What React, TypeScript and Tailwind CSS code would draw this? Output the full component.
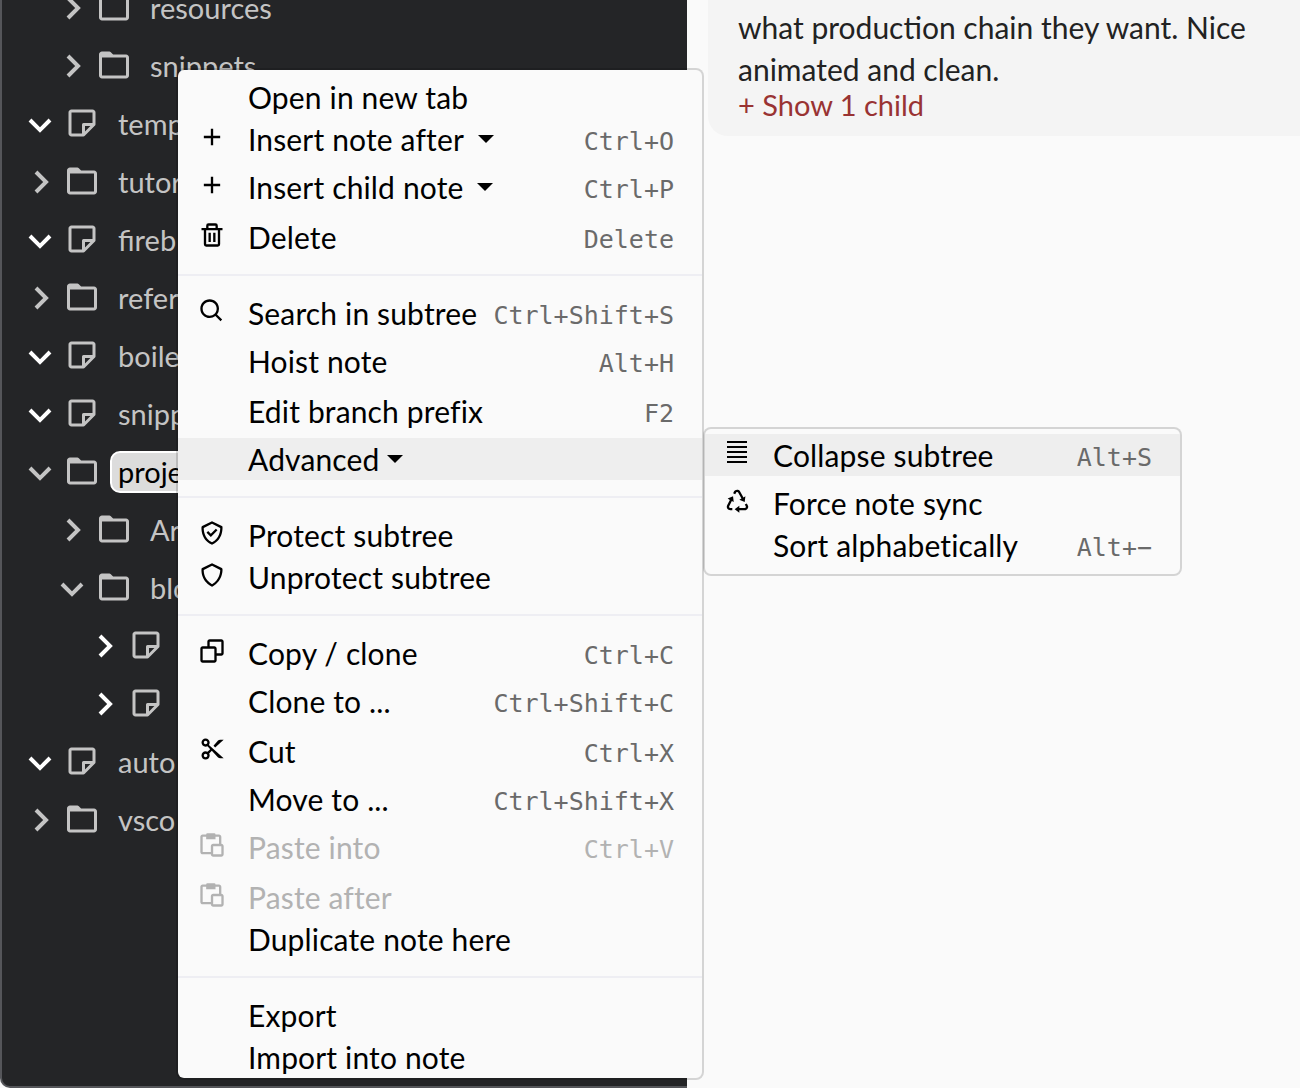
import type { ReactNode } from "react";
import {
  BiCheckShield,
  BiChevronDown,
  BiChevronRight,
  BiCopy,
  BiCut,
  BiFolder,
  BiNote,
  BiPaste,
  BiPlus,
  BiRecycle,
  BiSearch,
  BiShield,
  BiTrash,
} from "react-icons/bi";

interface TreeRow {
  label?: string;
  level: number;
  kind: "folder" | "note";
  open: boolean;
  bright: boolean;
  selected?: boolean;
}

const treeRows: TreeRow[] = [
  { label: "resources", level: 1, kind: "folder", open: false, bright: false },
  { label: "snippets", level: 1, kind: "folder", open: false, bright: false },
  { label: "temp", level: 0, kind: "note", open: true, bright: true },
  { label: "tutor", level: 0, kind: "folder", open: false, bright: false },
  { label: "fireb", level: 0, kind: "note", open: true, bright: true },
  { label: "refer", level: 0, kind: "folder", open: false, bright: false },
  { label: "boile", level: 0, kind: "note", open: true, bright: true },
  { label: "snipp", level: 0, kind: "note", open: true, bright: true },
  { label: "projects", level: 0, kind: "folder", open: true, bright: false, selected: true },
  { label: "Ar", level: 1, kind: "folder", open: false, bright: false },
  { label: "blog", level: 1, kind: "folder", open: true, bright: false },
  { level: 2, kind: "note", open: false, bright: true },
  { level: 2, kind: "note", open: false, bright: true },
  { label: "auto", level: 0, kind: "note", open: true, bright: true },
  { label: "vsco", level: 0, kind: "folder", open: false, bright: false },
];

function TreeItem({ row }: { row: TreeRow }) {
  const Chevron = row.open ? BiChevronDown : BiChevronRight;
  const Icon = row.kind === "folder" ? BiFolder : BiNote;
  return (
    <div className="flex h-[58px] items-center" style={{ paddingLeft: 14 + row.level * 32 }}>
      <Chevron size={48} className={row.bright ? "shrink-0 text-white" : "shrink-0 text-[#c4c4c4]"} />
      <Icon size={36} className="-mt-[2px] shrink-0 text-[#c4c4c4]" />
      {row.label &&
        (row.selected ? (
          <span className="ml-[10px] rounded-[10px] border-2 border-white bg-[#dcdcdc] px-[6px] text-[29px] leading-[38px] text-black">
            {row.label}
          </span>
        ) : (
          <span className="ml-[18px] text-[29px] leading-[38px] text-[#c4c4c4]">{row.label}</span>
        ))}
    </div>
  );
}

function Caret({ tight }: { tight?: boolean }) {
  return (
    <span
      className={`mb-[9px] inline-block h-0 w-0 border-x-8 border-t-8 border-x-transparent border-t-black align-middle ${
        tight ? "ml-[8px]" : "ml-[14px]"
      }`}
    />
  );
}

interface MenuRowProps {
  label: ReactNode;
  icon?: ReactNode;
  shortcut?: string;
  height: number;
  disabled?: boolean;
  active?: boolean;
  sub?: boolean;
}

function MenuRow({ label, icon, shortcut, height, disabled, active, sub }: MenuRowProps) {
  return (
    <div style={{ height }}>
      <div
        className={`flex h-[42px] items-center pr-[28px] text-[30px] tracking-[0.15px] ${
          sub ? "pl-[18px]" : "pl-[20px]"
        } ${active ? "bg-[#eeeeee]" : ""} ${disabled ? "text-[#b2b2b2]" : "text-black"}`}
      >
        <span className="-mt-[4px] flex w-[28px] shrink-0 justify-center">{icon}</span>
        <span className="ml-[22px] whitespace-nowrap leading-[42px]">{label}</span>
        {shortcut && (
          <span
            className={`ml-auto mt-[5px] whitespace-nowrap pl-2 font-['DejaVu_Sans_Mono',monospace] text-[25px] leading-[42px] tracking-normal ${
              disabled ? "text-[#b2b2b2]" : "text-[#6a6a6a]"
            }`}
          >
            {shortcut}
          </span>
        )}
      </div>
    </div>
  );
}

function Divider({ before, after }: { before: number; after: number }) {
  return <div className="h-[2px] bg-[#eeeef3]" style={{ marginTop: before, marginBottom: after }} />;
}

function CollapseIcon() {
  return (
    <svg width="28" height="28" viewBox="0 0 28 28" fill="none" stroke="currentColor" strokeWidth="2">
      <path d="M4 3h20M4 8h20M4 13h20M4 18h20M4 23h20" />
    </svg>
  );
}

export default function App() {
  return (
    <div className="relative flex h-[1088px] w-[1300px] overflow-hidden bg-[#fafafa] font-['Lato',sans-serif]">
      <aside className="h-[1088px] w-[687px] shrink-0 overflow-hidden rounded-bl-[10px] border-b-2 border-l-2 border-[#55565a] bg-[#242527]">
        <div className="-mt-[21px]">
          {treeRows.map((row, i) => (
            <TreeItem key={i} row={row} />
          ))}
        </div>
      </aside>

      <main className="ml-[21px] flex-1">
        <div className="h-[136px] rounded-bl-[20px] bg-[#f4f4f4] pl-[30px] pt-[6px] text-[30px] leading-[42px] text-[#222222]">
          <p>what production chain they want. Nice</p>
          <p>animated and clean.</p>
          <p className="-mt-[6px] text-[29px] text-[#993333]">+ Show 1 child</p>
        </div>
      </main>

      <div className="absolute left-[176px] top-[68px] h-[1012px] w-[528px] rounded-[8px] border-2 border-black/15 bg-[#fafafa] bg-clip-padding pt-[6px]">
        <MenuRow label="Open in new tab" height={42} />
        <MenuRow
          label={<>Insert note after<Caret /></>}
          icon={<BiPlus size={28} />}
          shortcut="Ctrl+O"
          height={48}
        />
        <MenuRow
          label={<>Insert child note<Caret /></>}
          icon={<BiPlus size={28} />}
          shortcut="Ctrl+P"
          height={50}
        />
        <MenuRow label="Delete" icon={<BiTrash size={28} />} shortcut="Delete" height={49} />
        <Divider before={9} after={16} />
        <MenuRow label="Search in subtree" icon={<BiSearch size={28} />} shortcut="Ctrl+Shift+S" height={48} />
        <MenuRow label="Hoist note" shortcut="Alt+H" height={50} />
        <MenuRow label="Edit branch prefix" shortcut="F2" height={48} />
        <MenuRow label={<>Advanced<Caret tight /></>} height={42} active />
        <Divider before={16} after={16} />
        <MenuRow label="Protect subtree" icon={<BiCheckShield size={28} />} height={42} />
        <MenuRow label="Unprotect subtree" icon={<BiShield size={28} />} height={42} />
        <Divider before={16} after={16} />
        <MenuRow label="Copy / clone" icon={<BiCopy size={28} />} shortcut="Ctrl+C" height={48} />
        <MenuRow label="Clone to ..." shortcut="Ctrl+Shift+C" height={50} />
        <MenuRow label="Cut" icon={<BiCut size={28} />} shortcut="Ctrl+X" height={48} />
        <MenuRow label="Move to ..." shortcut="Ctrl+Shift+X" height={48} />
        <MenuRow label="Paste into" icon={<BiPaste size={28} />} shortcut="Ctrl+V" height={50} disabled />
        <MenuRow label="Paste after" icon={<BiPaste size={28} />} height={42} disabled />
        <MenuRow label="Duplicate note here" height={42} />
        <Divider before={16} after={16} />
        <MenuRow label="Export" height={42} />
        <MenuRow label="Import into note" height={42} />
      </div>

      <div className="absolute left-[703px] top-[427px] h-[149px] w-[479px] rounded-[8px] border-2 border-black/15 bg-[#fafafa] bg-clip-padding pt-[5px]">
        <MenuRow label="Collapse subtree" icon={<CollapseIcon />} shortcut="Alt+S" height={48} active sub />
        <MenuRow label="Force note sync" icon={<BiRecycle size={28} />} height={42} sub />
        <MenuRow label="Sort alphabetically" shortcut="Alt+−" height={42} sub />
      </div>
    </div>
  );
}
